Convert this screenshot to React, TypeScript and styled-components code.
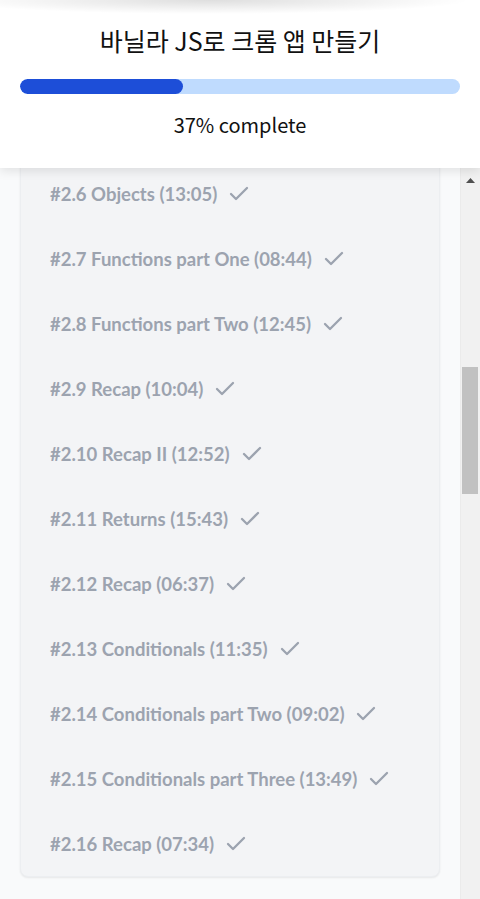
import { useCallback, useLayoutEffect, useRef, useState } from 'react'
import styled, { createGlobalStyle } from 'styled-components'
import { Check } from 'lucide-react'

const GlobalStyle = createGlobalStyle`
html, body {
    margin: 0;
    padding: 0;
    height: 100%;
}
body {
    font-family: "Noto Sans CJK KR", "Noto Sans", sans-serif;
    color: #111827;
}
`

const Page = styled.div`
height: 100vh;
display: flex;
flex-direction: column;
background: #f9fafb;
`

const Header = styled.header`
position: relative;
z-index: 2;
flex-shrink: 0;
height: 168px;
box-sizing: border-box;
padding: 18px 20px 0;
display: flex;
flex-direction: column;
align-items: center;
background:
    radial-gradient(ellipse 260px 14px at 210px 0, rgba(0, 0, 0, 0.13), rgba(0, 0, 0, 0)),
    #ffffff;
box-shadow: 0 3px 10px rgba(0, 0, 0, 0.1);
`

const CourseTitle = styled.h1`
margin: 0;
font-size: 25px;
font-weight: 400;
line-height: 44px;
color: #111111;
`

const ProgressTrack = styled.div`
width: 100%;
height: 15px;
margin-top: 17px;
border-radius: 999px;
background: #bfdbfe;
overflow: hidden;
`

const ProgressFill = styled.div`
height: 100%;
border-radius: 999px;
background: #1d4ed8;
`

const ProgressLabel = styled.p`
margin: 17px 0 0;
font-size: 20px;
line-height: 28px;
color: #111111;
`

const Body = styled.div`
flex: 1;
min-height: 0;
display: flex;
`

const Scroller = styled.main`
flex: 1;
overflow-y: auto;
scrollbar-width: none;

&::-webkit-scrollbar {
    display: none;
}
`

const ScrollRail = styled.div`
width: 20px;
flex-shrink: 0;
display: flex;
flex-direction: column;
background: #f1f1f1;
box-shadow: inset 1px 0 0 #ebebeb;
`

const RailButton = styled.div`
height: 24px;
flex-shrink: 0;
display: flex;
align-items: flex-start;
justify-content: center;
padding-top: 10px;
box-sizing: border-box;
`

const RailTrack = styled.div`
position: relative;
flex: 1;
`

const RailThumb = styled.div`
position: absolute;
left: 2px;
right: 2px;
background: #c1c1c1;
`

const Content = styled.div`
padding: 20px;
display: flex;
flex-direction: column;
gap: 24px;
`

const Card = styled.section`
background: #f3f4f6;
border-radius: 8px;
border: 1px solid #eceef1;
box-shadow: 0 1px 2px rgba(0, 0, 0, 0.08);
`

const SectionTitle = styled.h2`
margin: 0;
height: 71px;
padding: 0 30px;
display: flex;
align-items: center;
font-family: Lato, "Noto Sans", sans-serif;
font-size: 18px;
font-weight: 700;
color: #374151;
`

const Lesson = styled.div`
height: 65px;
padding: 0 29px;
display: flex;
align-items: center;
font-family: Lato, "Noto Sans", sans-serif;
font-size: 18.5px;
font-weight: 700;
color: #9ca3af;
`

const Done = styled(Check)`
margin-left: 10px;
flex-shrink: 0;
`

const sections = [
    {
        title: '#0 INTRODUCTION',
        lessons: ['#0.0 Welcome (02:04)', '#0.1 Requirements (01:23)'],
    },
    {
        title: '#1 THEORY',
        lessons: ['#1.0 Why JS (09:21)', '#1.1 Real Life JS (06:00)', '#1.2 Your first JS File (05:06)'],
    },
    {
        title: '#2 SUPER FAST JAVASCRIPT',
        lessons: [
            '#2.0 Basic Data Types (05:49)',
            '#2.1 Variables (10:51)',
            '#2.2 const and let (07:47)',
            '#2.3 Booleans (04:39)',
            '#2.4 Arrays (09:22)',
            '#2.5 Recap (06:37)',
            '#2.6 Objects (13:05)',
            '#2.7 Functions part One (08:44)',
            '#2.8 Functions part Two (12:45)',
            '#2.9 Recap (10:04)',
            '#2.10 Recap II (12:52)',
            '#2.11 Returns (15:43)',
            '#2.12 Recap (06:37)',
            '#2.13 Conditionals (11:35)',
            '#2.14 Conditionals part Two (09:02)',
            '#2.15 Conditionals part Three (13:49)',
            '#2.16 Recap (07:34)',
        ],
    },
    {
        title: '#3 JAVASCRIPT ON THE BROWSER',
        lessons: ['#3.0 The Document Object (07:04)', '#3.1 HTML in Javascript (04:35)', '#3.2 Searching For Elements (10:14)', '#3.3 Events (08:04)', '#3.4 Events part Two (06:07)', '#3.5 More Events (06:03)', '#3.6 CSS in Javascript (10:53)', '#3.7 CSS in Javascript part Two (06:04)', '#3.8 CSS in Javascript part Three (06:11)'],
    },
    {
        title: '#4 LOGIN',
        lessons: ['#4.0 Input Values (06:08)', '#4.1 Form Submission (10:02)', '#4.2 Events (06:39)', '#4.3 Events part Two (10:34)', '#4.4 Getting Username (06:05)', '#4.5 Saving Username (05:52)', '#4.6 Loading Username (10:31)', '#4.7 Super Recap (10:52)'],
    },
    {
        title: '#5 CLOCK',
        lessons: ['#5.0 Intervals (05:42)', '#5.1 Timeouts and Dates (06:19)', '#5.2 PadStart (06:47)', '#5.3 Recap (03:21)', '#5.4 Super Recap (04:02)'],
    },
    {
        title: '#6 QUOTES AND BACKGROUND',
        lessons: ['#6.0 Quotes (08:02)', '#6.1 Background (07:07)', '#6.2 Recap (04:08)', '#6.3 Setup (02:11)', '#6.4 Adding ToDos (10:50)', '#6.5 Deleting To Dos (10:59)', '#6.6 Saving To Dos (08:45)', '#6.7 Loading To Dos (12:59)'],
    },
]

const FOCUS = '#2.6 Objects (13:05)'

export default function App() {
    const scrollerRef = useRef<HTMLElement>(null)
    const focusRef = useRef<HTMLDivElement>(null)
    const trackRef = useRef<HTMLDivElement>(null)
    const [thumb, setThumb] = useState({ top: 0, height: 0 })

    const measure = useCallback(() => {
        const scroller = scrollerRef.current
        const track = trackRef.current
        if (!scroller || !track) return
        const trackHeight = track.clientHeight
        setThumb({
            top: (scroller.scrollTop / scroller.scrollHeight) * trackHeight,
            height: (scroller.clientHeight / scroller.scrollHeight) * trackHeight,
        })
    }, [])

    useLayoutEffect(() => {
        const scroller = scrollerRef.current
        const focus = focusRef.current
        if (!scroller || !focus) return
        const offset = focus.getBoundingClientRect().top - scroller.getBoundingClientRect().top
        scroller.scrollTop = offset + 7
        measure()
    }, [measure])

    return (
        <>
            <GlobalStyle />
            <Page>
                <Header>
                    <CourseTitle>바닐라 JS로 크롬 앱 만들기</CourseTitle>
                    <ProgressTrack>
                        <ProgressFill style={{ width: '37%' }} />
                    </ProgressTrack>
                    <ProgressLabel>37% complete</ProgressLabel>
                </Header>
                <Body>
                    <Scroller ref={scrollerRef} onScroll={measure}>
                        <Content>
                            {sections.map((section) => (
                                <Card key={section.title}>
                                    <SectionTitle>{section.title}</SectionTitle>
                                    {section.lessons.map((lesson) => (
                                        <Lesson key={lesson} ref={lesson === FOCUS ? focusRef : undefined}>
                                            {lesson}
                                            <Done size={24} strokeWidth={2.3} />
                                        </Lesson>
                                    ))}
                                </Card>
                            ))}
                        </Content>
                    </Scroller>
                    <ScrollRail>
                        <RailButton>
                            <svg width="9" height="5" viewBox="0 0 9 5">
                                <polygon points="4.5,0 9,5 0,5" fill="#505050" />
                            </svg>
                        </RailButton>
                        <RailTrack ref={trackRef}>
                            <RailThumb style={{ top: thumb.top, height: thumb.height }} />
                        </RailTrack>
                    </ScrollRail>
                </Body>
            </Page>
        </>
    )
}
